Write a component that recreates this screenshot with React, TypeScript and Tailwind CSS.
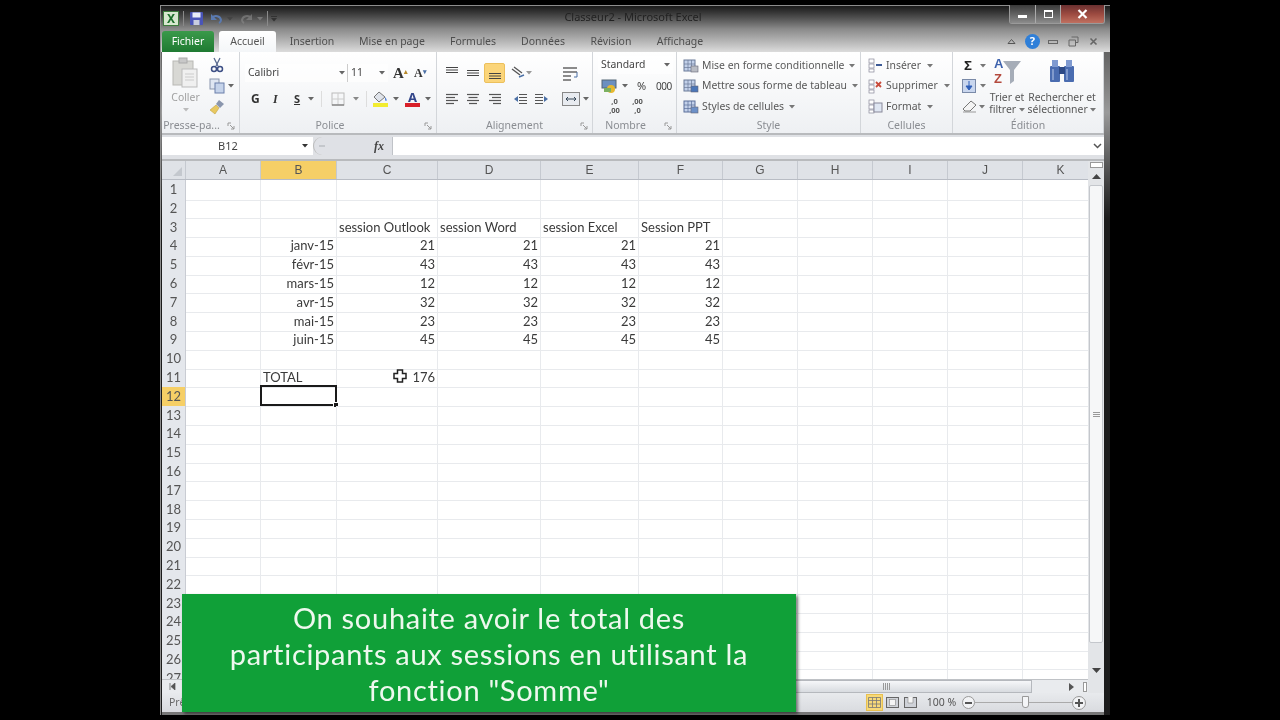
import React from "react";

const ui = "font-['Noto_Sans','Liberation_Sans',sans-serif]";

const Arrow = ({ c = "#666" }: { c?: string }) => (
  <svg width="6" height="4" viewBox="0 0 6 4" className="shrink-0"><path d="M0 0h6L3 3.5z" fill={c} /></svg>
);

const Lines = ({ kind }: { kind: "l" | "c" | "r" | "t" | "m" | "b" }) => {
  const w = [12, 9, 12, 8];
  if (kind === "t" || kind === "m" || kind === "b") {
    const y = kind === "t" ? 1.5 : kind === "m" ? 4.5 : 7.5;
    return (
      <svg width="14" height="14" viewBox="0 0 14 14"><g stroke="#444" strokeWidth="1">
        <path d={`M1 ${y}h12M1 ${y + 2.5}h12M1 ${y + 5}h12`} /></g></svg>
    );
  }
  return (
    <svg width="14" height="14" viewBox="0 0 14 14"><g stroke="#555" strokeWidth="1.2">
      {w.map((l, i) => {
        const x = kind === "l" ? 1 : kind === "c" ? 7 - l / 2 : 13 - l;
        return <path key={i} d={`M${x} ${2.5 + i * 3}h${l}`} />;
      })}
    </g></svg>
  );
};

const Indent = ({ flip }: { flip?: boolean }) => (
  <svg width="15" height="14" viewBox="0 0 15 14" style={flip ? { transform: "scaleX(-1)" } : undefined}>
    <g stroke="#555" strokeWidth="1.2"><path d="M6 2.500h8M6 5.500h8M6 8.500h8M6 11.500h8" /></g>
    <path d="M5 4v6L1 7z" fill="#4a6fa5" />
  </svg>
);

const TableIcon = ({ a, b }: { a: string; b: string }) => (
  <svg width="16" height="16" viewBox="0 0 16 16">
    <rect x="1" y="2" width="11" height="11" fill="#c3d1ea" stroke={a} />
    <path d="M1 6h11M1 9.500h11M5 2v11M8.500 2v11" stroke={a} strokeWidth=".7" />
    <rect x="8" y="8" width="7" height="6" fill={b} stroke="#667" strokeWidth=".6" />
  </svg>
);

const RowIcon = ({ children }: { children: React.ReactNode }) => (
  <div className="w-[15px] h-[15px] flex items-center justify-center shrink-0">{children}</div>
);

const Group = ({ w, label, launcher, labelPad = 0, children }: { w: number; label: string; launcher?: boolean; labelPad?: number; children: React.ReactNode }) => (
  <div className="flex flex-col h-full border-r border-[#d3d6da] shrink-0" style={{ width: w }}>
    <div className="h-[67px] flex min-h-0">{children}</div>
    <div className="h-[14px] flex items-center justify-center relative text-[10.5px] text-[#8a8d92]" style={{ paddingRight: labelPad }}>
      {label}
      {launcher && (
        <svg width="8" height="8" viewBox="0 0 8 8" className="absolute right-[4px] top-[3px]">
          <path d="M1 1h3M1 1v3M7 7H4M7 7V4M3 3l4 4" stroke="#999" fill="none" />
        </svg>
      )}
    </div>
  </div>
);

const cols = "grid-cols-[24px_75px_76px_101px_103px_98px_84px_75px_75px_75px_75px_66px]";
const letters = ["A", "B", "C", "D", "E", "F", "G", "H", "I", "J", "K"];

const data: Record<number, string[]> = {
  3: ["", "", "session Outlook", "session Word", "session Excel", "Session PPT"],
  4: ["", "janv-15", "21", "21", "21", "21"],
  5: ["", "févr-15", "43", "43", "43", "43"],
  6: ["", "mars-15", "12", "12", "12", "12"],
  7: ["", "avr-15", "32", "32", "32", "32"],
  8: ["", "mai-15", "23", "23", "23", "23"],
  9: ["", "juin-15", "45", "45", "45", "45"],
  11: ["", "TOTAL", "176"],
};

const Sheet = () => (
  <div className="flex-1 min-h-0 overflow-hidden bg-white font-['Lato','Liberation_Sans',sans-serif] text-[13px] text-[#3a3a3a]">
    {Array.from({ length: 27 }, (_, i) => i + 1).map((r) => (
      <div key={r} className={`grid ${cols} h-[18.8px]`}>
        <div className={`flex items-center justify-center border-b border-r border-[#c9ccd3] text-[#555] ${r === 12 ? "bg-[#f6cf66]" : "bg-[#e4e7ec]"}`}>{r}</div>
        {letters.map((_, c) => {
          const v = data[r]?.[c] ?? "";
          const left = r === 3 || (r === 11 && c === 1);
          return (
            <div key={c} className={`relative flex items-center whitespace-nowrap border-b border-r border-[#e8eaed] ${left ? "justify-start pl-[2px]" : "justify-end pr-[2px]"}`}>
              {v}
              {r === 12 && c === 1 && (
                <div className="absolute left-[-1px] top-[-2px] w-[77px] h-[21px] border-2 border-[#1a1a1a]">
                  <div className="absolute right-[-4px] bottom-[-4px] w-[6px] h-[6px] bg-[#1a1a1a] border border-white" />
                </div>
              )}
              {r === 11 && c === 2 && (
                <svg width="14" height="14" viewBox="0 0 14 14" className="absolute left-[56px] top-[1px]">
                  <path d="M4.500 1h5v3.500H13v5H9.500V13h-5V9.500H1v-5h3.500z" fill="#fff" stroke="#222" strokeWidth="1.500" />
                </svg>
              )}
            </div>
          );
        })}
      </div>
    ))}
  </div>
);

export default function App() {
  return (
    <div className={`w-[1280px] h-[720px] bg-black pl-[160px] pt-[5px] overflow-hidden ${ui}`}>
      <div className="relative w-[950px] h-[710px] flex flex-col pl-px pr-[6px] border-t border-l border-[#8d8d8d] bg-gradient-to-b from-[#3c3c3c] via-[#9a9a9a] via-15% to-[#1c1c1c] to-30% blur-[0.4px]">
        <div className="-mx-px -mr-[6px] pl-px pr-[6px] bg-gradient-to-b from-[#1a1a1a] via-[#8a8a8a] to-[#dcdcdc]">
          {/* title bar */}
          <div className="h-[25px] flex items-center relative">
            <div className="ml-[1px] w-[16px] h-[15px] bg-[#d8e8d0] border border-[#3d7c3d] flex items-center justify-center">
              <span className="text-[#1d6f2c] text-[12px] font-bold leading-none">X</span>
            </div>
            <div className="ml-[4px] w-px h-[15px] bg-[#8a8a8a]" />
            <svg width="15" height="15" viewBox="0 0 15 15" className="ml-[5px]">
              <rect x="1" y="1" width="13" height="13" rx="1" fill="#4a55b8" />
              <rect x="3.500" y="1.500" width="8" height="5" fill="#e8ecf8" />
              <rect x="4.500" y="9" width="6" height="5" fill="#c8cde0" />
            </svg>
            <svg width="14" height="14" viewBox="0 0 14 14" className="ml-[6px]">
              <path d="M2 6a5 4.500 0 0 1 9 2c0 1.500-1 2.500-2 3" fill="none" stroke="#5a7ab0" strokeWidth="2" />
              <path d="M1 2v6h6z" fill="#5a7ab0" />
            </svg>
            <span className="ml-[3px]"><Arrow c="#444" /></span>
            <svg width="14" height="14" viewBox="0 0 14 14" className="ml-[6px]" opacity=".6">
              <path d="M12 6a5 4.500 0 0 0-9 2c0 1.500 1 2.500 2 3" fill="none" stroke="#8a8a8a" strokeWidth="2" />
              <path d="M13 2v6H7z" fill="#8a8a8a" />
            </svg>
            <span className="ml-[4px]"><Arrow c="#777" /></span>
            <div className="ml-[4px] w-px h-[15px] bg-[#8a8a8a]" />
            <div className="ml-[3px] flex flex-col items-center gap-[1px]">
              <div className="w-[6px] h-px bg-[#333]" />
              <Arrow c="#333" />
            </div>
            <div className="flex-1 text-center text-[11px] text-[#222] pr-[115px] pb-[3px]">Classeur2  -  Microsoft Excel</div>
            <div className="absolute right-[-1px] top-[-1px] flex h-[19px] border border-[#9a9a9a] border-t-0 rounded-b-[3px] overflow-hidden">
              <div className="w-[26px] flex items-center justify-center bg-gradient-to-b from-[#3a3a3a] to-[#8c8c8c] border-r border-[#aaa]">
                <div className="w-[9px] h-[3px] bg-white mt-[5px]" />
              </div>
              <div className="w-[25px] flex items-center justify-center bg-gradient-to-b from-[#3a3a3a] to-[#8c8c8c] border-r border-[#aaa]">
                <div className="w-[9px] h-[8px] border border-white border-t-2" />
              </div>
              <div className="w-[43px] flex items-center justify-center bg-gradient-to-b from-[#6a3030] via-[#9c4a40] to-[#c07060]">
                <svg width="11" height="10" viewBox="0 0 11 10"><path d="M1.500 1l8 8M9.500 1l-8 8" stroke="#fff" strokeWidth="2.200" /></svg>
              </div>
            </div>
          </div>
          {/* tabs */}
          <div className="h-[21px] flex items-end text-[10.5px] text-[#4e4e4e] relative">
            <div className="w-[52px] h-[21px] rounded-t-[3px] bg-gradient-to-b from-[#3a9a4a] to-[#1f7a32] text-white flex items-center justify-center">Fichier</div>
            <div className="ml-[5px] w-[57px] h-[21px] rounded-t-[3px] bg-gradient-to-b from-[#fff] to-[#f4f6f8] text-[#555] flex items-center justify-center">Accueil</div>
            <div className="flex h-[21px] items-center">
              <span className="w-[72px] text-center">Insertion</span>
              <span className="w-[88px] text-center">Mise en page</span>
              <span className="w-[74px] text-center">Formules</span>
              <span className="w-[66px] text-center">Données</span>
              <span className="w-[70px] text-center">Révision</span>
              <span className="w-[68px] text-center">Affichage</span>
            </div>
            <div className="flex-1 h-[21px] flex items-center justify-end">
              <span className="w-[20.500px] flex justify-center"><svg width="9" height="7" viewBox="0 0 9 7"><path d="M1 5.500L4.500 1.500 8 5.500z" fill="none" stroke="#555" /></svg></span>
              <span className="w-[20.500px] flex justify-center"><span className="w-[15px] h-[15px] rounded-full bg-[#2f7fd8] text-white text-[11px] font-bold flex items-center justify-center">?</span></span>
              <span className="w-[20.500px] flex justify-center"><span className="w-[10px] h-[4px] border border-[#666]" /></span>
              <span className="w-[20.500px] flex justify-center"><svg width="11" height="11" viewBox="0 0 11 11"><path d="M3.500 1h6.500v5.500H7.500M1 4h6.500v6H1z" fill="none" stroke="#666" /></svg></span>
              <span className="w-[20.500px] flex justify-center"><svg width="9" height="9" viewBox="0 0 9 9"><path d="M1.500 1.500l6 6M7.500 1.500l-6 6" stroke="#666" strokeWidth="1.600" /></svg></span>
            </div>
          </div>
        </div>

        {/* ribbon */}
        <div className="h-[83px] flex bg-gradient-to-b from-white to-[#eef0f3] text-[10.4px] text-[#585858] border-b-2 border-[#b8babd]">
          <Group w={78} label="Presse-pa..." launcher labelPad={18}>
            <div className="w-[47px] flex flex-col items-center pt-[5px]">
              <svg width="27" height="31" viewBox="0 0 27 31">
                <rect x="1" y="4" width="20" height="24" fill="#d8d8d4" stroke="#b8b8b4" />
                <rect x="7" y="1" width="8" height="5" fill="#c8c8c8" stroke="#aaa" />
                <rect x="10" y="12" width="15" height="18" fill="#f0f0f0" stroke="#bbb" />
                <path d="M13 17h9M13 20h9M13 23h9" stroke="#ccc" />
              </svg>
              <span className="mt-[2px] text-[#a0a0a0]">Coller</span>
              <span className="mt-[2px]"><Arrow c="#bbb" /></span>
            </div>
            <div className="flex flex-col pt-[5px] gap-[5px]">
              <svg width="16" height="16" viewBox="0 0 16 16"><path d="M5 1l4 8M11 1L7 9" stroke="#5a6a90" strokeWidth="1.300" /><circle cx="5" cy="12" r="2.500" fill="none" stroke="#3d4f85" strokeWidth="1.500" /><circle cx="11" cy="12" r="2.500" fill="none" stroke="#3d4f85" strokeWidth="1.500" /></svg>
              <div className="flex items-center gap-[3px]">
                <svg width="16" height="16" viewBox="0 0 16 16"><rect x="1" y="1" width="9" height="10" fill="#dfe6f2" stroke="#8a96ad" /><rect x="6" y="5" width="9" height="10" fill="#c5d3ea" stroke="#6a7faa" /></svg>
                <Arrow />
              </div>
              <svg width="16" height="16" viewBox="0 0 16 16"><path d="M10 1l5 4-4 4-4-4z" fill="#8a96ad" /><path d="M7 6l3 3-4 6-5-4z" fill="#e8c860" stroke="#b89830" strokeWidth=".5" /></svg>
            </div>
          </Group>

          <Group w={197} label="Police" launcher labelPad={16}>
            <div className="flex flex-col pl-[5px] pt-[12px]">
              <div className="flex items-center h-[18px]">
                <div className="w-[103px] h-[18px] bg-white/60 border-r border-[#ccc] flex items-center justify-between px-[3px] pr-[1px] text-[#444]">Calibri<span className="mr-[1px]"><Arrow /></span></div>
                <div className="w-[40px] h-[18px] bg-white/60 flex items-center justify-between px-[3px] text-[#444]">11<Arrow /></div>
                <span className="ml-[5px] w-[18px] font-['Liberation_Serif',serif] text-[15px] font-bold text-[#333]">A<sup className="text-[7px] text-[#b98a2a]">▴</sup></span>
                <span className="ml-[3px] w-[18px] font-['Liberation_Serif',serif] text-[12px] font-bold text-[#333]">A<sup className="text-[7px] text-[#4a6fa5]">▾</sup></span>
              </div>
              <div className="flex items-center h-[20px] mt-[7px] text-[#333]">
                <span className="ml-[6px] w-[22px] text-[12px] font-bold">G</span>
                <span className="w-[21px] font-['Liberation_Serif',serif] text-[12px] italic font-bold">I</span>
                <span className="w-[14px] text-[11px] font-bold underline">S</span>
                <Arrow />
                <div className="ml-[7px] w-px h-[16px] bg-[#ddd]" />
                <svg width="14" height="14" viewBox="0 0 14 14" className="ml-[9px]"><rect x="1" y="1" width="12" height="12" fill="none" stroke="#bbb" /><path d="M7 1v12M1 7h12" stroke="#ccc" /><path d="M1 13h12" stroke="#666" /></svg>
                <span className="ml-[8px]"><Arrow c="#888" /></span>
                <div className="ml-[7px] w-px h-[16px] bg-[#ddd]" />
                <div className="ml-[6px] flex flex-col items-center">
                  <svg width="15" height="12" viewBox="0 0 15 12"><path d="M6 1L1 6l5 5 6-5z" fill="#dfe3ea" stroke="#777" /><path d="M12 6c2 2 2 4 1 4s-1-2-1-4" fill="#4a7ad0" /></svg>
                  <div className="w-[15px] h-[4px] bg-[#f2ec30]" />
                </div>
                <span className="ml-[5px]"><Arrow /></span>
                <div className="ml-[6px] flex flex-col items-center">
                  <span className="text-[13px] font-bold text-[#33468a] leading-[12px]">A</span>
                  <div className="w-[15px] h-[4px] bg-[#d8202a]" />
                </div>
                <span className="ml-[5px]"><Arrow /></span>
              </div>
            </div>
          </Group>

          <Group w={156} label="Alignement" launcher>
            <div className="flex flex-col pl-[8px] pt-[10px]">
              <div className="flex items-center h-[22px]">
                <span className="w-[21px]"><Lines kind="t" /></span>
                <span className="w-[21px]"><Lines kind="m" /></span>
                <span className="w-[21px] h-[20px] -ml-[3px] mr-[3px] pl-[3px] flex items-center rounded-[2px] bg-[#fbd57a] border border-[#ecc05c]"><Lines kind="b" /></span>
                <svg width="16" height="14" viewBox="0 0 16 14" className="ml-[2px]"><path d="M2 3l8 6M4 1l8 6" stroke="#555" strokeWidth="1.300" /><path d="M9 11l5-2" stroke="#4a6fa5" strokeWidth="1.500" /></svg>
                <Arrow c="#999" />
                <svg width="16" height="15" viewBox="0 0 16 15" className="ml-[30px]"><path d="M1 2h14M1 6h14M1 10h8M1 14h8" stroke="#666" strokeWidth="1.300" /><path d="M15 6v5h-3" fill="none" stroke="#4a6fa5" /></svg>
              </div>
              <div className="flex items-center h-[22px] mt-[4px]">
                <span className="w-[21px]"><Lines kind="l" /></span>
                <span className="w-[22px]"><Lines kind="c" /></span>
                <span className="w-[25px]"><Lines kind="r" /></span>
                <span className="w-[21px]"><Indent /></span>
                <span className="w-[21px]"><Indent flip /></span>
                <svg width="18" height="14" viewBox="0 0 18 14" className="ml-[7px]"><rect x=".5" y=".5" width="17" height="13" fill="#e8ebf0" stroke="#888" /><path d="M4 7h10M4 7l2-2M4 7l2 2M14 7l-2-2M14 7l-2 2" stroke="#345" fill="none" /></svg>
                <span className="ml-[3px]"><Arrow /></span>
              </div>
            </div>
          </Group>

          <Group w={84} label="Nombre" launcher labelPad={18}>
            <div className="flex flex-col pl-[5px] pt-[4px]">
              <div className="w-[75px] h-[18px] bg-white/60 flex items-center justify-between px-[3px] text-[#444]">Standard<Arrow /></div>
              <div className="flex items-center h-[20px] mt-[2px]">
                <svg width="17" height="15" viewBox="0 0 17 15" className="ml-[3px]"><rect x="1" y="1" width="14" height="8" fill="#6b8fc0" stroke="#567" /><circle cx="10" cy="10" r="4" fill="#e6b830" /><rect x="3" y="9" width="7" height="4" fill="#7cb060" /></svg>
                <span className="ml-[4px]"><Arrow /></span>
                <span className="ml-[9px] text-[11px] text-[#444] w-[13px]">%</span>
                <span className="ml-[6px] text-[10px] text-[#444] tracking-[-0.5px]">000</span>
              </div>
              <div className="flex items-center h-[20px] text-[7.5px] leading-[9px] font-bold text-[#555]">
                <span className="ml-[5px] w-[23px] text-center">,0<br />,00</span>
                <span className="w-[23px] text-center">,00<br />,0</span>
              </div>
            </div>
          </Group>

          <Group w={184} label="Style">
            <div className="flex flex-col pl-[6px] pt-[4px] gap-[1.500px]">
              {[
                ["Mise en forme conditionnelle", true],
                ["Mettre sous forme de tableau", true],
                ["Styles de cellules", true],
              ].map(([t], i) => (
                <div key={String(t)} className="h-[19px] flex items-center gap-[3px] whitespace-nowrap">
                  <TableIcon a={i === 2 ? "#5a6f9a" : "#6a7a98"} b={i === 0 ? "#b9bcc4" : i === 1 ? "#4a76b8" : "#6c90c8"} />
                  <span>{String(t)}</span>
                  <span className="ml-[2px]"><Arrow c="#777" /></span>
                </div>
              ))}
            </div>
          </Group>

          <Group w={92} label="Cellules">
            <div className="flex flex-col pl-[7px] pt-[4px] gap-[1.500px]">
              {["Insérer", "Supprimer", "Format"].map((t, i) => (
                <div key={t} className="h-[19px] flex items-center gap-[3px] whitespace-nowrap">
                  <RowIcon>
                    <svg width="15" height="15" viewBox="0 0 15 15">
                      <rect x="1" y="1" width="5" height="4" fill="#fff" stroke="#889" strokeWidth=".7" />
                      <rect x="1" y="6" width="5" height="4" fill="#fff" stroke="#889" strokeWidth=".7" />
                      <rect x="1" y="11" width="5" height="3" fill="#fff" stroke="#889" strokeWidth=".7" />
                      {i === 0 && <path d="M8 7h6" stroke="#3d5a96" strokeWidth="2" />}
                      {i === 1 && <path d="M8 3l5 5M13 3L8 8" stroke="#c84a3a" strokeWidth="1.800" />}
                      {i === 2 && <rect x="6" y="4" width="8" height="9" fill="#dfe6f2" stroke="#889" />}
                    </svg>
                  </RowIcon>
                  <span>{t}</span>
                  <span className="ml-[3px]"><Arrow c="#777" /></span>
                </div>
              ))}
            </div>
          </Group>

          <Group w={151} label="Édition">
            <div className="flex flex-col pl-[9px] pt-[4px] gap-[1.500px] w-[36px] shrink-0">
              <div className="h-[19px] flex items-center gap-[6px]"><span className="w-[12px] text-[13px] font-bold text-[#222] text-center leading-none">Σ</span><Arrow c="#777" /></div>
              <div className="h-[19px] flex items-center gap-[4px]"><svg width="14" height="14" viewBox="0 0 14 14"><rect x=".5" y=".5" width="13" height="13" fill="#c9d6ee" stroke="#7a8aa8" /><path d="M7 2v7M4 7l3 4 3-4z" fill="#2f5fb8" stroke="#2f5fb8" /></svg><Arrow c="#777" /></div>
              <div className="h-[19px] flex items-center gap-[2px]"><svg width="15" height="13" viewBox="0 0 15 13"><path d="M9 1l5 4-6 6H3L1 9z" fill="#f4f4f4" stroke="#777" /><path d="M1 12h13" stroke="#999" /></svg><Arrow c="#777" /></div>
            </div>
            <div className="w-[36px] shrink-0 flex flex-col items-center pt-[5px]">
              <svg width="30" height="28" viewBox="0 0 30 28">
                <text x="2" y="11" fontSize="13" fontWeight="bold" fill="#3d62ad" fontFamily="Liberation Sans">A</text>
                <text x="2" y="26" fontSize="13" fontWeight="bold" fill="#b44a3e" fontFamily="Liberation Sans">Z</text>
                <path d="M11 4h18l-7 9v11l-4 3V13z" fill="#a6adb8" />
              </svg>
              <div className="mt-[6px] leading-[12px] text-center whitespace-nowrap">Trier et<br />filtrer <span className="inline-block align-middle"><Arrow c="#777" /></span></div>
            </div>
            <div className="w-[74px] shrink-0 flex flex-col items-center pt-[5px]">
              <svg width="28" height="28" viewBox="0 0 28 28">
                <rect x="2" y="9" width="10" height="16" rx="1" fill="#4a6cb0" />
                <rect x="16" y="9" width="10" height="16" rx="1" fill="#4a6cb0" />
                <rect x="4" y="3" width="6" height="7" fill="#7f9ad0" />
                <rect x="18" y="3" width="6" height="7" fill="#7f9ad0" />
                <rect x="11" y="10" width="6" height="7" fill="#2e4a86" />
                <path d="M5 12v11M19 12v11" stroke="#b8c8e8" />
              </svg>
              <div className="mt-[6px] leading-[12px] text-center whitespace-nowrap">Rechercher et<br />sélectionner <span className="inline-block align-middle"><Arrow c="#777" /></span></div>
            </div>
          </Group>
        </div>

        {/* formula bar */}
        <div className="h-[26px] pt-[2px] pb-[4px] flex bg-[#dfe1e5] border-b-2 border-[#b8babd] text-[#444]">
          <div className="w-[151px] bg-white flex items-center justify-between text-[11px] pr-[5px]">
            <span className="ml-[56px]">B12</span>
            <Arrow c="#333" />
          </div>
          <div className="w-[79px] bg-[#dfe1e6] rounded-l-[10px] border-l border-[#bbb] flex items-center justify-between pl-[5px] pr-[8px]">
            <div className="w-[6px] h-[2px] bg-[#c4c7cc]" />
            <span className="font-['Liberation_Serif',serif] italic font-bold text-[12px] text-[#444]">fx</span>
          </div>
          <div className="flex-1 bg-white border-l border-[#c0c3c8] flex justify-end items-center">
            <div className="w-[14px] flex justify-center"><svg width="9" height="6" viewBox="0 0 9 6"><path d="M1 1l3.500 3.500L8 1" fill="none" stroke="#555" strokeWidth="1.500" /></svg></div>
          </div>
        </div>

        {/* sheet + scrollbar */}
        <div className="flex-1 min-h-0 flex">
          <div className="w-[927px] flex flex-col min-w-0">
            <div className={`grid ${cols} h-[19px] shrink-0 bg-[#dfe2e7] text-[#555] text-[12px] font-['Liberation_Sans',sans-serif] border-b border-[#b8bcc4]`}>
              <div className="flex items-end justify-end pr-[3px] pb-[3px] border-r border-[#c5c9d0]">
                <div className="w-0 h-0 border-l-[9px] border-l-transparent border-b-[9px] border-b-[#c4c8ce]" />
              </div>
              {letters.map((l) => (
                <div key={l} className={`flex items-center justify-center border-r border-[#c5c9d0] ${l === "B" ? "bg-[#f6cf66]" : ""} ${l === "K" ? "pl-[10px]" : ""}`}>{l}</div>
              ))}
            </div>
            <Sheet />
            <div className="h-[14px] shrink-0 flex items-center bg-[#e9ebee] border-t border-[#bfc2c6]">
              <div className="w-[21px] flex justify-center">
                <svg width="7" height="7" viewBox="0 0 7 7"><path d="M1 0v7M6 0v7L2 3.500z" stroke="#555" fill="#555" strokeWidth=".7" /></svg>
              </div>
              <div className="flex-1 flex justify-end h-full">
                <div className="w-[290px] h-full bg-gradient-to-b from-[#f6f7f9] to-[#d8dbe0] border border-[#b5b8bd] flex items-center justify-center">
                  <svg width="8" height="7" viewBox="0 0 8 7"><path d="M.5 0v7M2.500 0v7M4.500 0v7M6.500 0v7" stroke="#999" /></svg>
                </div>
                <div className="w-[56px] flex items-center justify-end">
                  <svg width="5" height="8" viewBox="0 0 5 8"><path d="M0 0l5 4-5 4z" fill="#555" /></svg>
                  <div className="ml-[9px] mr-[1px] w-[4px] h-[10px] bg-white border border-[#999]" />
                </div>
              </div>
            </div>
          </div>
          <div className="w-[16px] shrink-0 flex flex-col items-center bg-[#e3e5e8] relative">
            <div className="w-[13px] h-[6px] border border-[#999] bg-white mt-[1px]" />
            <div className="mt-[3px] h-[10px] flex items-center"><svg width="9" height="5" viewBox="0 0 9 5"><path d="M0 5l4.500-5L9 5z" fill="#444" /></svg></div>
            <div className="mt-[4px] w-[14px] h-[458px] bg-[#f6f7f8] border border-[#c4c7cc] rounded-[2px] flex flex-col items-center justify-center gap-px">
              <div className="w-[7px] h-px bg-[#999]" /><div className="w-[7px] h-px bg-[#999]" /><div className="w-[7px] h-px bg-[#999]" />
            </div>
            <div className="flex-1" />
            <div className="h-[10px] mb-[18px] flex items-center"><svg width="9" height="5" viewBox="0 0 9 5"><path d="M0 0l4.500 5L9 0z" fill="#444" /></svg></div>
          </div>
        </div>

        {/* status bar */}
        <div className="h-[19px] shrink-0 flex items-center bg-gradient-to-b from-[#e8eaed] to-[#d9dbdf] text-[10.5px] text-[#6a6a6a] border-b-[3px] border-[#777] box-content">
          <span className="ml-[7px]">Prêt</span>
          <div className="flex-1" />
          <div className="w-[17px] h-[17px] bg-[#f7d978] border border-[#e8c050] flex items-center justify-center mr-[3px]">
            <svg width="13" height="11" viewBox="0 0 13 11"><path d="M.5.500h12v10H.5zM.5 3.500h12M.5 7h12M4.500.500v10M8.500.500v10" fill="none" stroke="#777" strokeWidth=".8" /></svg>
          </div>
          <svg width="13" height="11" viewBox="0 0 13 11" className="mr-[5px]"><rect x=".5" y=".5" width="12" height="10" fill="#cfd2d8" stroke="#666" /><rect x="3.500" y="2.500" width="6" height="6" fill="#f5f5f5" stroke="#888" strokeWidth=".6" /></svg>
          <svg width="13" height="11" viewBox="0 0 13 11" className="mr-[7px]"><rect x=".5" y=".5" width="12" height="10" fill="#cfd2d8" stroke="#666" /><path d="M4 0v6h5V0" fill="#f5f5f5" stroke="#888" strokeWidth=".6" /></svg>
          <span className="w-[35px] text-center text-[#555]">100 %</span>
          <div className="ml-[3px] w-[13px] h-[13px] rounded-full bg-[#f2f3f5] border border-[#999] flex items-center justify-center"><div className="w-[7px] h-[2px] bg-[#555]" /></div>
          <div className="relative w-[97px] h-px bg-[#aaa]">
            <div className="absolute left-[47px] -top-[6px] w-[7px] h-[12px] bg-[#f4f5f7] border border-[#999] rounded-b-[3px]" />
          </div>
          <div className="w-[14px] h-[14px] rounded-full bg-[#f2f3f5] border border-[#999] flex items-center justify-center relative">
            <div className="w-[8px] h-[2px] bg-[#555]" /><div className="absolute w-[2px] h-[8px] bg-[#555]" />
          </div>
          <div className="w-[18px]" />
        </div>
      </div>

      {/* green caption */}
      <div className="absolute left-[182px] top-[594px] w-[614px] h-[118px] bg-[#10a038] text-[#eef8ee] text-center text-[29px] tracking-[0.7px] leading-[36px] pt-[6px] shadow-[2px_2px_3px_rgba(0,0,0,0.5)] blur-[0.3px] font-['Lato','Noto_Sans',sans-serif]">
        On souhaite avoir le total des<br />
        participants aux sessions en utilisant la<br />
        fonction "Somme"
      </div>
    </div>
  );
}
